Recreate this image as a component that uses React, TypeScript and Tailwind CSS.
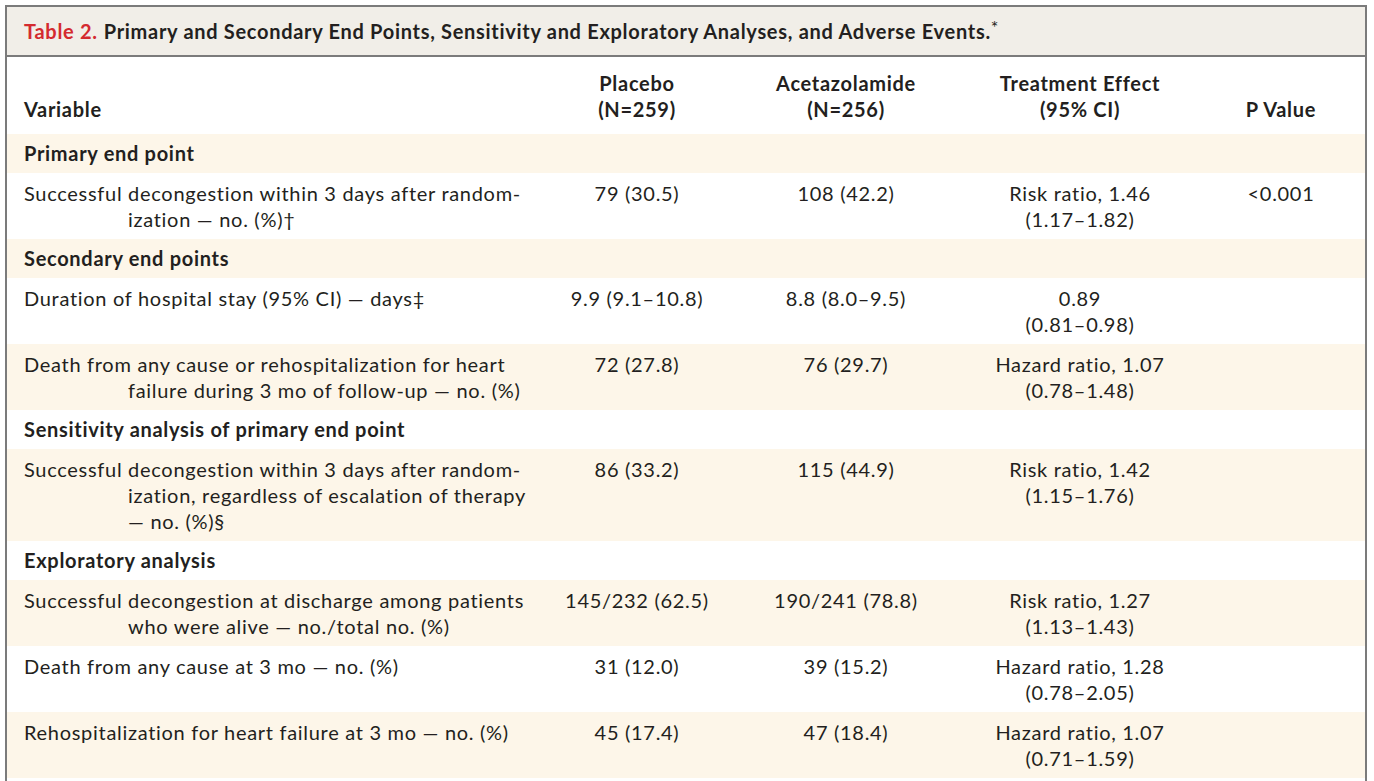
const font = { fontFamily: "Lato, 'Open Sans', sans-serif" };

type Section = { kind: "section"; label: string; shaded: boolean };
type DataRow = {
  kind: "data";
  lines: string[];
  placebo: string;
  acet: string;
  effect: string[];
  p?: string;
  shaded: boolean;
};
type Row = Section | DataRow;

const rows: Row[] = [
  { kind: "section", label: "Primary end point", shaded: true },
  {
    kind: "data",
    lines: ["Successful decongestion within 3 days after random-", "ization — no. (%)†"],
    placebo: "79 (30.5)",
    acet: "108 (42.2)",
    effect: ["Risk ratio, 1.46", "(1.17–1.82)"],
    p: "<0.001",
    shaded: false,
  },
  { kind: "section", label: "Secondary end points", shaded: true },
  {
    kind: "data",
    lines: ["Duration of hospital stay (95% CI) — days‡"],
    placebo: "9.9 (9.1–10.8)",
    acet: "8.8 (8.0–9.5)",
    effect: ["0.89", "(0.81–0.98)"],
    shaded: false,
  },
  {
    kind: "data",
    lines: ["Death from any cause or rehospitalization for heart", "failure during 3 mo of follow-up — no. (%)"],
    placebo: "72 (27.8)",
    acet: "76 (29.7)",
    effect: ["Hazard ratio, 1.07", "(0.78–1.48)"],
    shaded: true,
  },
  { kind: "section", label: "Sensitivity analysis of primary end point", shaded: false },
  {
    kind: "data",
    lines: [
      "Successful decongestion within 3 days after random-",
      "ization, regardless of escalation of therapy",
      "— no. (%)§",
    ],
    placebo: "86 (33.2)",
    acet: "115 (44.9)",
    effect: ["Risk ratio, 1.42", "(1.15–1.76)"],
    shaded: true,
  },
  { kind: "section", label: "Exploratory analysis", shaded: false },
  {
    kind: "data",
    lines: ["Successful decongestion at discharge among patients", "who were alive — no./total no. (%)"],
    placebo: "145/232 (62.5)",
    acet: "190/241 (78.8)",
    effect: ["Risk ratio, 1.27", "(1.13–1.43)"],
    shaded: true,
  },
  {
    kind: "data",
    lines: ["Death from any cause at 3 mo — no. (%)"],
    placebo: "31 (12.0)",
    acet: "39 (15.2)",
    effect: ["Hazard ratio, 1.28", "(0.78–2.05)"],
    shaded: false,
  },
  {
    kind: "data",
    lines: ["Rehospitalization for heart failure at 3 mo — no. (%)"],
    placebo: "45 (17.4)",
    acet: "47 (18.4)",
    effect: ["Hazard ratio, 1.07", "(0.71–1.59)"],
    shaded: true,
  },
];

const grid = "grid grid-cols-[538px_184px_234px_234px_168px]";

function TableRow({ row }: { row: Row }) {
  const bg = row.shaded ? "bg-[#fdf6e9]" : "bg-white";
  if (row.kind === "section") {
    return (
      <div className={`${bg} px-[17px] py-[7px] font-bold leading-[25px]`}>
        {row.label}
      </div>
    );
  }
  return (
    <div className={`${grid} ${bg} py-[7px]`}>
      <div className="pl-[17px]">
        {row.lines.map((l, i) => (
          <div key={i} className={i > 0 ? "pl-[104px]" : ""}>
            {l}
          </div>
        ))}
      </div>
      <div className="text-center">{row.placebo}</div>
      <div className="text-center">{row.acet}</div>
      <div className="text-center">
        {row.effect.map((e, i) => (
          <div key={i}>{e}</div>
        ))}
      </div>
      <div className="text-center">{row.p}</div>
    </div>
  );
}

export default function App() {
  return (
    <div className="min-h-screen bg-white pl-[5px] pt-[5px] text-[#231f20]" style={font}>
      <div className="min-h-[790px] w-[1362px] border-x-2 border-t-2 border-[#7b7b7b] text-[20px] leading-[26px] tracking-[0.7px]">
        <div className="flex h-[50px] items-center border-b-2 border-[#7b7b7b] bg-[#f1eee8] px-[17px] font-bold">
          <span className="text-[#d42a2f]">Table 2.</span>
          <span className="ml-[6px]">
            Primary and Secondary End Points, Sensitivity and Exploratory Analyses, and Adverse Events.
            <span className="relative top-[-5px] text-[18px] font-normal leading-none">*</span>
          </span>
        </div>
        <div className={`${grid} h-[77px] items-end pb-[12px] font-bold`}>
          <div className="pl-[17px]">Variable</div>
          <div className="text-center">
            <div>Placebo</div>
            <div>(N=259)</div>
          </div>
          <div className="text-center">
            <div>Acetazolamide</div>
            <div>(N=256)</div>
          </div>
          <div className="text-center">
            <div>Treatment Effect</div>
            <div>(95% CI)</div>
          </div>
          <div className="text-center">P Value</div>
        </div>
        {rows.map((r, i) => (
          <TableRow key={i} row={r} />
        ))}
      </div>
    </div>
  );
}
